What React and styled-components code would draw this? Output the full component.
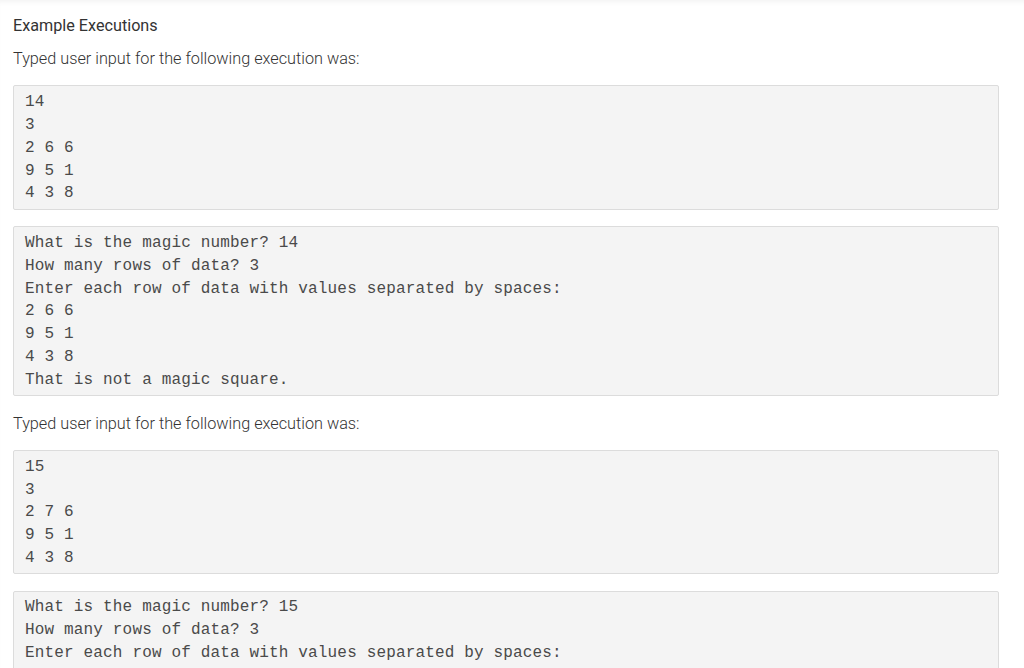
import React from "react";
import styled, { createGlobalStyle } from "styled-components";

const Global = createGlobalStyle`
  html, body { margin: 0; padding: 0; background: #fff; }
  body { font-family: Roboto, "Noto Sans", sans-serif; color: #333; }
`;

const Page = styled.div`
  padding: 14px 25px 0 13px;
  box-shadow: inset 0 5px 5px -3px rgba(0, 0, 0, 0.05);
  min-height: 668px;
  box-sizing: border-box;
`;

const Heading = styled.h3`
  margin: 0 0 10px;
  font-size: 16.2px;
  font-weight: 400;
  line-height: 24px;
  color: #333;
`;

const Para = styled.p`
  margin: 0 0 14.5px;
  font-size: 16.25px;
  font-weight: 300;
  line-height: 22.857px;
  color: #333;
`;

const Pre = styled.pre`
  margin: 0 0 16.5px;
  padding: 4.7px 11px 3.3px;
  background: #f4f4f4;
  border: 1px solid #dcdcdc;
  border-radius: 2px;
  font-family: "Liberation Mono", "Courier New", monospace;
  font-size: 16px;
  letter-spacing: 0.16px;
  line-height: 22.857px;
  color: #4a4a4a;
  white-space: pre;
  overflow: hidden;
`;

const runs = [
  {
    input: ["14", "3", "2 6 6", "9 5 1", "4 3 8"],
    output: [
      "What is the magic number? 14",
      "How many rows of data? 3",
      "Enter each row of data with values separated by spaces:",
      "2 6 6",
      "9 5 1",
      "4 3 8",
      "That is not a magic square.",
    ],
  },
  {
    input: ["15", "3", "2 7 6", "9 5 1", "4 3 8"],
    output: [
      "What is the magic number? 15",
      "How many rows of data? 3",
      "Enter each row of data with values separated by spaces:",
      "2 7 6",
      "9 5 1",
      "4 3 8",
      "That is a magic square.",
    ],
  },
];

export default function App() {
  return (
    <>
      <Global />
      <Page>
        <Heading>Example Executions</Heading>
        {runs.map((r, i) => (
          <React.Fragment key={i}>
            <Para>Typed user input for the following execution was:</Para>
            <Pre>{r.input.join("\n")}</Pre>
            <Pre>{r.output.join("\n")}</Pre>
          </React.Fragment>
        ))}
      </Page>
    </>
  );
}
